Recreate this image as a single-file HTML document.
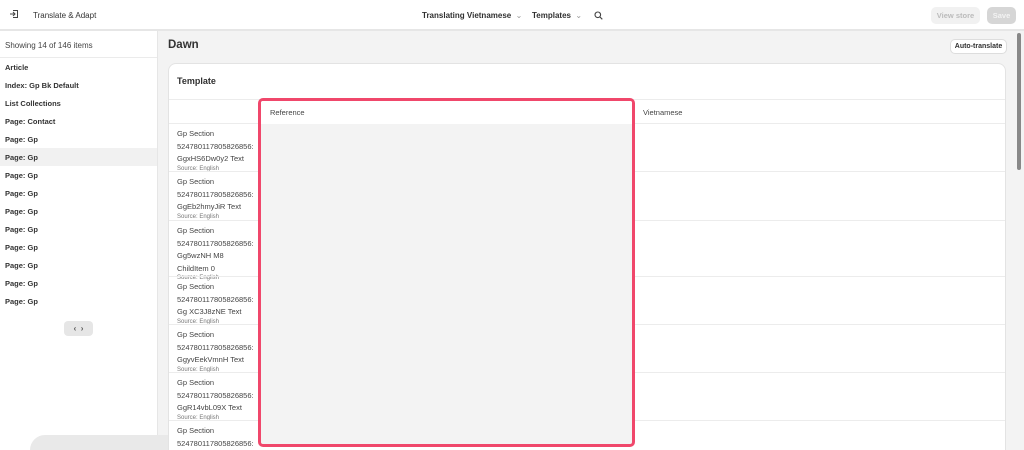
<!DOCTYPE html>
<html><head><style>
*{box-sizing:border-box;margin:0;padding:0}
html{width:1024px;height:450px;overflow:hidden}
body{width:1024px;height:450px;overflow:hidden;font-family:"Liberation Sans",sans-serif;background:#f3f3f3;position:relative;color:#303030}
.top{position:absolute;left:0;top:0;width:1024px;height:31px;background:#fff;border-bottom:2px solid #e6e6e6;font-size:8px;z-index:5}
.top span{position:absolute;top:11px}
.side{position:absolute;left:0;top:31px;width:158px;height:419px;background:#fff;border-right:1px solid #e6e6e6;z-index:1}
.side .hd{height:27px;border-bottom:1px solid #ebebeb;font-size:8px;padding:10px 5px 0;color:#444}
.side .it{height:18px;font-size:7.5px;font-weight:bold;padding:5px 5px 0;color:#333}
.side .sel{background:#f1f1f1}
.card{position:absolute;left:168px;top:63px;width:838px;height:387px;background:#fff;border:1px solid #e3e3e3;border-bottom:none;border-radius:8px 8px 0 0;overflow:hidden;z-index:3}
.row{position:absolute;left:0;width:838px;border-top:1px solid #ececec}
.cell{position:absolute;left:8px;font-size:7.5px;line-height:12.5px;color:#444}
.cell small{display:block;font-size:6px;line-height:6px;color:#777}
.ref{position:absolute;left:258px;top:98px;width:377px;height:349px;border:3px solid #f0476b;border-radius:5px;background:#f3f3f3;overflow:hidden;z-index:4}
.ref .h{height:23px;background:#fff;font-size:7.5px;padding:7px 9px;color:#444}
</style></head><body>
<div class="top">
<svg style="position:absolute;left:9px;top:9px" width="10" height="10" viewBox="0 0 10 10" fill="none" stroke="#444" stroke-width="1"><path d="M4 1.5h4.5v7H4M1 5h5M4 3l2 2-2 2"/></svg>
<span style="left:33px;color:#333">Translate &amp; Adapt</span>
<span style="left:422px;font-weight:bold">Translating Vietnamese <span style="position:static;color:#999;font-weight:normal">&nbsp;⌄</span></span>
<span style="left:532px;font-weight:bold">Templates <span style="position:static;color:#999;font-weight:normal">&nbsp;⌄</span></span>
<svg style="position:absolute;left:594px;top:11px" width="9" height="9" viewBox="0 0 9 9" fill="none" stroke="#444" stroke-width="1.1"><circle cx="3.8" cy="3.8" r="2.8"/><path d="M6 6l2.3 2.3"/></svg>
<div style="position:absolute;left:931px;top:7px;width:49px;height:17px;border-radius:5px;background:#f1f1f1;color:#bbb;font-size:7.5px;text-align:center;line-height:17px;font-weight:bold">View store</div>
<div style="position:absolute;left:987px;top:7px;width:29px;height:17px;border-radius:5px;background:#d6d6d6;color:#f3f3f3;font-size:7.5px;text-align:center;line-height:17px;font-weight:bold">Save</div>
</div>
<div class="side">
<div class="hd">Showing 14 of 146 items</div>
<div class="it">Article</div><div class="it">Index: Gp Bk Default</div><div class="it">List Collections</div><div class="it">Page: Contact</div><div class="it">Page: Gp</div><div class="it sel">Page: Gp</div><div class="it">Page: Gp</div><div class="it">Page: Gp</div><div class="it">Page: Gp</div><div class="it">Page: Gp</div><div class="it">Page: Gp</div><div class="it">Page: Gp</div><div class="it">Page: Gp</div><div class="it">Page: Gp</div>
<div style="position:absolute;left:64px;top:290px;width:29px;height:15px;border-radius:4px;background:#e6e6e6;font-size:8px;color:#555;text-align:center;line-height:15px;font-weight:bold">‹ &nbsp;›</div>
</div>
<div style="position:absolute;left:168px;top:39px;font-size:11.5px;font-weight:bold;color:#333">Dawn</div>
<div style="position:absolute;left:950px;top:39px;width:57px;height:15px;border-radius:5px;background:#fff;border:1px solid #ddd;font-size:7px;font-weight:bold;text-align:center;line-height:13px">Auto-translate</div>
<div style="position:absolute;left:30px;top:435px;width:975px;height:15px;border-radius:16px 16px 0 0;background:#e9e9e9;z-index:2"></div>
<div class="card">
<div style="position:absolute;left:8px;top:12px;font-size:9px;font-weight:bold">Template</div>
<div class="row" style="top:35px;height:24px"><span style="position:absolute;left:474px;top:8px;font-size:7.5px;color:#444">Vietnamese</span></div>
<div class="row" style="top:59px"><div class="cell" style="top:4px">Gp Section<br>524780117805826856:<br>GgxHS6Dw0y2 Text<small>Source: English</small></div></div>
<div class="row" style="top:107px"><div class="cell" style="top:4px">Gp Section<br>524780117805826856:<br>GgEb2hmyJiR Text<small>Source: English</small></div></div>
<div class="row" style="top:156px"><div class="cell" style="top:4px">Gp Section<br>524780117805826856:<br>Gg5wzNH M8<br>ChildItem 0<small>Source: English</small></div></div>
<div class="row" style="top:212px"><div class="cell" style="top:4px">Gp Section<br>524780117805826856:<br>Gg XC3J8zNE Text<small>Source: English</small></div></div>
<div class="row" style="top:260px"><div class="cell" style="top:4px">Gp Section<br>524780117805826856:<br>GgyvEekVmnH Text<small>Source: English</small></div></div>
<div class="row" style="top:308px"><div class="cell" style="top:4px">Gp Section<br>524780117805826856:<br>GgR14vbL09X Text<small>Source: English</small></div></div>
<div class="row" style="top:356px"><div class="cell" style="top:4px">Gp Section<br>524780117805826856:<br>GgT8b7I5Ra</div></div>
</div>
<div class="ref"><div class="h">Reference</div></div>
<div style="position:absolute;left:1017px;top:33px;width:4px;height:137px;border-radius:2px;background:#888;z-index:5"></div>
</body></html>
